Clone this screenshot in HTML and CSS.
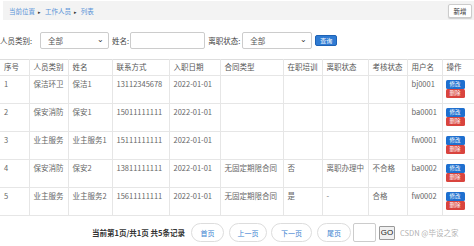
FILE: index.html
```html
<!DOCTYPE html>
<html>
<head>
<meta charset="utf-8">
<link rel="stylesheet" href="styles.css">
</head>
<body>
<div class="crumb">
  <div class="crumb-path">当前位置 <span class="tri">▸</span> 工作人员 <span class="tri">▸</span> 列表</div>
  <button class="btn-new">新增</button>
</div>
<div class="filter">
  <span class="lbl">人员类别:</span>
  <div class="sel w1"><span>全部</span><span class="chev">⌄</span></div>
  <span class="lbl">姓名:</span>
  <div class="inp"></div>
  <span class="lbl">离职状态:</span>
  <div class="sel w2"><span>全部</span><span class="chev">⌄</span></div>
  <button class="btn-q">查询</button>
</div>
<table class="grid">
  <colgroup>
    <col style="width:29px"><col style="width:39px"><col style="width:44px"><col style="width:57px"><col style="width:51px"><col style="width:63px"><col style="width:39px"><col style="width:46px"><col style="width:39px"><col style="width:35px"><col style="width:32px">
  </colgroup>
  <thead>
    <tr><th>序号</th><th>人员类别</th><th>姓名</th><th>联系方式</th><th>入职日期</th><th>合同类型</th><th>在职培训</th><th>离职状态</th><th>考核状态</th><th>用户名</th><th>操作</th></tr>
  </thead>
  <tbody>
    <tr><td>1</td><td>保洁环卫</td><td>保洁1</td><td>13112345678</td><td>2022-01-01</td><td></td><td></td><td></td><td></td><td>bj0001</td><td><span class="b-edit">修改</span><span class="b-del">删除</span></td></tr>
    <tr><td>2</td><td>保安消防</td><td>保安1</td><td>15011111111</td><td>2022-01-01</td><td></td><td></td><td></td><td></td><td>ba0001</td><td><span class="b-edit">修改</span><span class="b-del">删除</span></td></tr>
    <tr><td>3</td><td>业主服务</td><td>业主服务1</td><td>15111111111</td><td>2022-01-01</td><td></td><td></td><td></td><td></td><td>fw0001</td><td><span class="b-edit">修改</span><span class="b-del">删除</span></td></tr>
    <tr><td>4</td><td>保安消防</td><td>保安2</td><td>13811111111</td><td>2022-01-01</td><td>无固定期限合同</td><td>否</td><td>离职办理中</td><td>不合格</td><td>ba0002</td><td><span class="b-edit">修改</span><span class="b-del">删除</span></td></tr>
    <tr><td>5</td><td>业主服务</td><td>业主服务2</td><td>15611111111</td><td>2022-01-01</td><td>无固定期限合同</td><td>是</td><td>-</td><td>合格</td><td>fw0002</td><td><span class="b-edit">修改</span><span class="b-del">删除</span></td></tr>
  </tbody>
</table>
<div class="pager">
  <span class="info">当前第1页/共1页 共5条记录</span>
  <span class="pill p1">首页</span>
  <span class="pill p2">上一页</span>
  <span class="pill p3">下一页</span>
  <span class="pill p4">尾页</span>
  <div class="pinp"></div>
  <button class="go">GO</button>
  <span class="wm">CSDN @毕设之家</span>
</div>
</body>
</html>
```
FILE: styles.css
```css
* { box-sizing: border-box; }
html, body { margin: 0; padding: 0; background: #fff; }
body {
  width: 474px; height: 246px; overflow: hidden;
  font-family: "Noto Sans CJK SC", "Noto Sans", sans-serif;
  font-size: 7.5px; color: #555;
}
.crumb {
  margin: 1px 0 0 3px; height: 19px;
  background: #f3f3f3;
  display: flex; align-items: center; justify-content: space-between;
  padding: 0 2px 0 6px;
}
.crumb-path { color: #5a94d8; font-size: 6.5px; }
.tri { color: #333; font-size: 5px; margin: 0 2px; }
.btn-new {
  font-family: inherit; font-size: 6.5px; color: #333;
  background: #fff; border: 1px solid #ccc; border-radius: 2px;
  height: 14px; width: 24px; padding: 0;
  box-shadow: 0 1px 1px rgba(0,0,0,0.15);
}
.filter {
  display: flex; align-items: center;
  margin-top: 12px; height: 17px;
}
.lbl { color: #444; font-size: 7.5px; }
.sel {
  height: 17px; border: 1px solid #ccc; border-radius: 2px; background: #fff;
  display: flex; align-items: center; justify-content: space-between;
  padding: 0 4px 0 7px; color: #555; margin: 0 3px 0 2px;
}
.w1 { width: 69px; margin-left: 8px; }
.w2 { width: 70px; }
.chev { font-size: 8px; line-height: 8px; color: #333; transform: translateY(-2px); }
.inp { width: 75px; height: 17px; border: 1px solid #ccc; border-radius: 2px; margin: 0 3px 0 1px; }
.btn-q {
  font-family: inherit; font-size: 6px; color: #fff;
  background: #2f7bd3; border: 1px solid #1e62b5; border-radius: 2px;
  width: 22px; height: 11px; padding: 0; line-height: 9px;
}
.grid {
  border-collapse: collapse; table-layout: fixed; width: 474px;
  margin-top: 10px;
}
.grid th, .grid td {
  border: 1px solid #e6e6e6; text-align: left; vertical-align: top;
  padding: 2px 0 0 4px; font-weight: normal; color: #666;
  white-space: nowrap; overflow: hidden;
}
.grid thead th { height: 16px; padding-top: 1px; border-top-color: #ddd; color: #555; }
.grid tbody td { height: 28px; padding-top: 2px; }
.grid tr > :first-child { border-left: none; }
.b-edit, .b-del {
  display: block; width: 19px; height: 9px; border-radius: 1.5px;
  color: #fff; font-size: 5.5px; line-height: 9px; text-align: center;
  margin-left: -1px;
}
.b-edit { background: #1e6fcf; margin-top: 2px; }
.b-del { background: #d9443e; }
.pager {
  position: relative;
  display: flex; align-items: center;
  margin-top: 7px; padding-left: 92px; height: 19px;
}
.info { font-weight: bold; color: #333; font-size: 7.5px; margin-right: 6px; }
.pill {
  height: 19px; border: 1px solid #ddd; border-radius: 10px;
  display: flex; align-items: center; justify-content: center;
  color: #3a7fd0; font-size: 7px;
}
.p1 { width: 33px; margin-right: 5px; }
.p2 { width: 38px; margin-right: 4px; }
.p3 { width: 41px; margin-right: 5px; }
.p4 { width: 34px; margin-right: 2px; }
.pinp { width: 23px; height: 19px; border: 1px solid #ccc; border-radius: 2px; margin-right: 3px; }
.go {
  font-family: "Liberation Sans", sans-serif; font-size: 8px; color: #222;
  background: #f0f0f0; border: 1px solid #999; border-radius: 1px;
  height: 14px; width: 16px; padding: 0;
}
.wm {
  position: absolute; left: 400px; top: 4px;
  color: rgba(120,120,120,0.6); font-size: 7.5px; white-space: nowrap;
}
```
